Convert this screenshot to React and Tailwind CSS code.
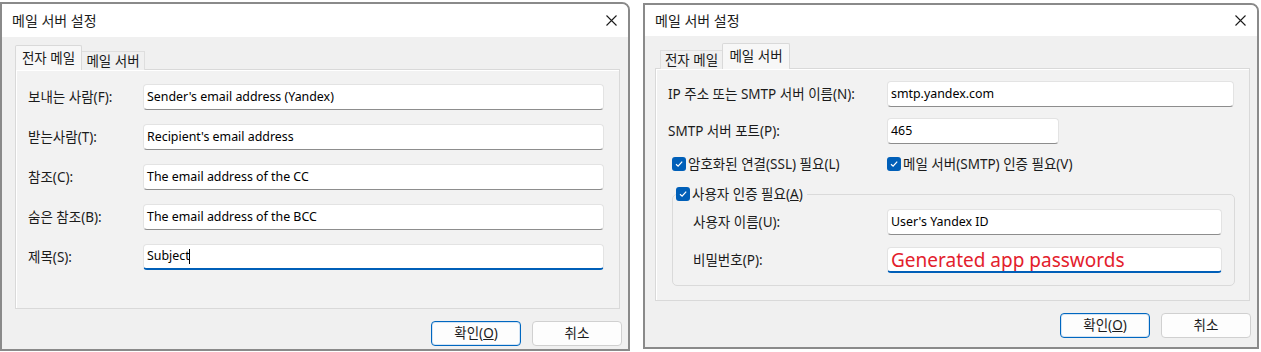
import React from "react";

const font = "font-['Noto_Sans','Noto_Sans_CJK_KR',sans-serif]";

const CloseIcon = () => (
  <svg width="11" height="11" viewBox="0 0 11 11" className="block">
    <path d="M0.5 0.5 L10.5 10.5 M10.5 0.5 L0.5 10.5" stroke="#1b1b1b" strokeWidth="1.1" fill="none" />
  </svg>
);

const Check = () => (
  <span className="w-[14px] h-[14px] rounded-[3px] bg-[#005fb8] flex items-center justify-center shrink-0">
    <svg width="10" height="10" viewBox="0 0 10 10">
      <path d="M2 5.2 L4.1 7.2 L8.2 2.6" stroke="#fff" strokeWidth="1.2" fill="none" />
    </svg>
  </span>
);

const Field = ({ text, focused, caret, width, red }) => (
  <div
    className={
      "h-[26px] bg-white rounded-[4px] border border-[#e3e3e3] flex items-center px-[3px] overflow-hidden " +
      (focused ? "border-b-2 border-b-[#005fb8]" : "border-b-[#8d8d8d]")
    }
    style={{ width }}
  >
    {red ? (
      <span className="text-[19px] leading-none text-[#e3202c] pt-[2px]">{text}</span>
    ) : (
      <span className="text-[12.4px] leading-none text-black">
        {text}
        {caret && <span className="inline-block w-px h-[15px] bg-black align-middle -ml-[1px]" />}
      </span>
    )}
  </div>
);

const Button = ({ children, primary }) => (
  <div
    className={
      "w-[90px] h-[25px] rounded-[4px] bg-[#fdfdfd] flex items-center justify-center text-[13.5px] text-[#1b1b1b] " +
      (primary ? "border border-[#0067c0] shadow-[inset_0_0_0_1px_#d4e4f4]" : "border border-[#d0d0d0]")
    }
  >
    {children}
  </div>
);

const TitleBar = ({ h }) => (
  <div className={"bg-white flex items-center justify-between pl-[10px] pr-[11px] shrink-0 " + h}>
    <span className="text-[14px] text-[#1b1b1b]">메일 서버 설정</span>
    <CloseIcon />
  </div>
);

const Row = ({ label, children, labelW }) => (
  <div className="flex items-center">
    <div className="text-[13.5px] text-[#1b1b1b] shrink-0" style={{ width: labelW }}>
      {label}
    </div>
    {children}
  </div>
);

const EmailDialog = () => {
  const rows = [
    ["보내는 사람(F):", "Sender's email address (Yandex)"],
    ["받는사람(T):", "Recipient's email address"],
    ["참조(C):", "The email address of the CC"],
    ["숨은 참조(B):", "The email address of the BCC"],
  ];
  return (
    <div className="w-[630px] h-[349px] mt-[2px] border-2 border-[#8a8a8a] rounded-tr-[8px] bg-[#f0f0f0] flex flex-col overflow-hidden shrink-0">
      <TitleBar h="h-[33px]" />
      <div className="pl-[13px] pr-[8px] pt-[9px]">
        <div className="flex items-end h-[24px] relative z-10 -mb-px">
          <div className="w-[67px] h-[25px] bg-[#f7f7f7] border border-[#d9d9d9] border-b-0 rounded-t-[2px] flex items-center justify-center text-[13.5px] text-[#1b1b1b]">
            전자 메일
          </div>
          <div className="w-[63px] h-[19px] bg-[#f0f0f0] border border-[#dedede] border-l-0 border-b-0 flex items-center justify-center text-[13.5px] text-[#1b1b1b]">
            메일 서버
          </div>
        </div>
        <div className="h-[240px] border border-[#d9d9d9] bg-[#f2f2f2] shadow-[inset_1px_1px_0_#fff] pl-[12px] pt-[14px] flex flex-col gap-[14px]">
          {rows.map(([l, t]) => (
            <Row key={l} label={l} labelW={115}>
              <Field text={t} width={461} />
            </Row>
          ))}
          <Row label="제목(S):" labelW={115}>
            <Field text="Subject" width={461} focused caret />
          </Row>
        </div>
      </div>
      <div className="flex justify-end gap-[11px] pr-[6px] mt-[12px]">
        <Button primary>
          확인(<span className="underline">O</span>)
        </Button>
        <Button>취소</Button>
      </div>
    </div>
  );
};

const ServerDialog = () => (
  <div className="w-[616px] h-[346px] mt-[3px] border-2 border-[#8a8a8a] rounded-tr-[8px] bg-[#f0f0f0] flex flex-col overflow-hidden shrink-0">
    <TitleBar h="h-[31px]" />
    <div className="pl-[10px] pr-[7px] pt-[8px]">
      <div className="flex items-end h-[25px] relative z-10 -mb-px pl-[5px]">
        <div className="w-[62px] h-[19px] bg-[#f0f0f0] border border-[#dedede] border-r-0 border-b-0 flex items-center justify-center text-[13.5px] text-[#1b1b1b]">
          전자 메일
        </div>
        <div className="w-[68px] h-[26px] bg-[#f7f7f7] border border-[#d9d9d9] border-b-0 rounded-t-[2px] flex items-center justify-center text-[13.5px] text-[#1b1b1b]">
          메일 서버
        </div>
      </div>
      <div className="h-[233px] border border-[#d9d9d9] bg-[#f2f2f2] shadow-[inset_1px_1px_0_#fff] pt-[12px] flex flex-col">
        <div className="pl-[12px]">
          <Row label="IP 주소 또는 SMTP 서버 이름(N):" labelW={219}>
            <Field text="smtp.yandex.com" width={347} />
          </Row>
        </div>
        <div className="pl-[12px] mt-[11px]">
          <Row label="SMTP 서버 포트(P):" labelW={219}>
            <Field text="465" width={172} />
          </Row>
        </div>
        <div className="flex items-center h-[16px] mt-[12px] pl-[16px] text-[13.5px] text-[#1b1b1b]">
          <div className="flex items-center gap-[2px] w-[215px]">
            <Check />
            <span>암호화된 연결(SSL) 필요(L)</span>
          </div>
          <div className="flex items-center gap-[2px]">
            <Check />
            <span>메일 서버(SMTP) 인증 필요(V)</span>
          </div>
        </div>
        <fieldset className="mt-[14px] ml-[16px] w-[563px] border border-[#dadada] rounded-[5px] pb-[12px]">
          <legend className="ml-[3px] pr-[4px] flex items-center gap-[2px] text-[13.5px] text-[#1b1b1b] h-[16px]">
            <Check />
            <span>
              사용자 인증 필요(<span className="underline">A</span>)
            </span>
          </legend>
          <div className="pl-[20px] mt-[7px] flex flex-col gap-[12px]">
            <Row label="사용자 이름(U):" labelW={194}>
              <Field text="User's Yandex ID" width={335} />
            </Row>
            <Row label="비밀번호(P):" labelW={194}>
              <Field text="Generated app passwords" width={335} focused red />
            </Row>
          </div>
        </fieldset>
      </div>
    </div>
    <div className="flex justify-end gap-[11px] pr-[6px] mt-[12px]">
      <Button primary>
        확인(<span className="underline">O</span>)
      </Button>
      <Button>취소</Button>
    </div>
  </div>
);

export default function App() {
  return (
    <div className={"w-[1261px] h-[352px] bg-white flex items-start gap-[13px] overflow-hidden " + font}>
      <EmailDialog />
      <ServerDialog />
    </div>
  );
}
